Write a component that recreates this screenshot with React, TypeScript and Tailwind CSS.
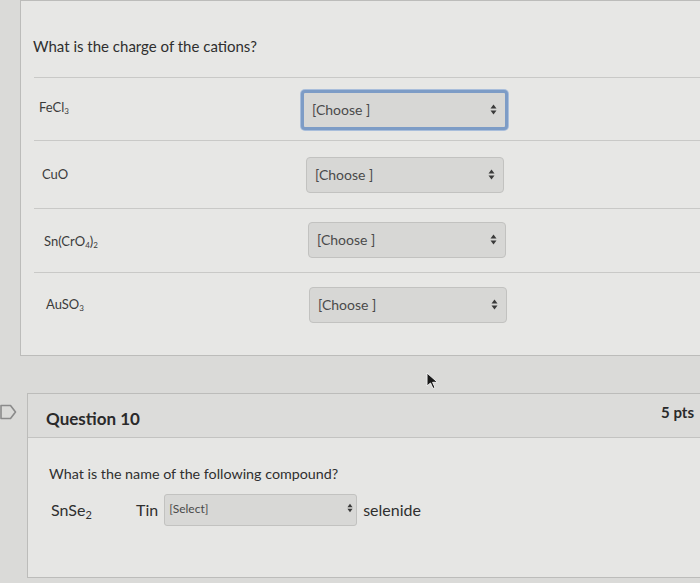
import React from "react";

const font = { fontFamily: "Lato, 'Open Sans', sans-serif" };

function Arrows({ small }: { small?: boolean }) {
  return (
    <svg width={small ? 6 : 7} height={small ? 10 : 11} viewBox="0 0 7 11" className="text-[#3a3a3a]">
      <path d="M3.5 0.5 L6.5 4.5 H0.5 Z" fill="currentColor" />
      <path d="M3.5 10.5 L6.5 6.5 H0.5 Z" fill="currentColor" />
    </svg>
  );
}

function Choose({ focused }: { focused?: boolean }) {
  return (
    <div
      className={
        "flex h-[36px] w-[198px] items-center justify-between rounded-[4px] bg-[#d7d7d5] pl-[8px] pr-[8px] text-[14px] text-[#4a4a4a]" +
        (focused
          ? " h-[40px] w-[207px] border-[3px] border-[#7d9cc6] shadow-[0_0_0_1px_#a9bedb]"
          : " border border-[#c2c2c0]")
      }
    >
      <span>[Choose ]</span>
      <Arrows />
    </div>
  );
}

interface RowProps {
  label: React.ReactNode;
  focused?: boolean;
  shift: string;
  height: string;
  labelShift: string;
}

function Row({ label, focused, shift, height, labelShift }: RowProps) {
  return (
    <div className={"flex border-t border-[#c9c9c7] " + height}>
      <div className={"w-[267px] text-[13px] text-[#3b3b3b] " + labelShift}>{label}</div>
      <div className={shift}>
        <Choose focused={focused} />
      </div>
    </div>
  );
}

export default function App() {
  const rows: RowProps[] = [
    {
      label: <>FeCl<sub className="text-[8px]">3</sub></>,
      focused: true,
      shift: "pt-[12px] ml-[0px]",
      height: "h-[63px]",
      labelShift: "pt-[20px] pl-[5px]",
    },
    {
      label: "CuO",
      shift: "pt-[16px] ml-[5px]",
      height: "h-[68px]",
      labelShift: "pt-[24px] pl-[8px]",
    },
    {
      label: <>Sn(CrO<sub className="text-[8px]">4</sub>)<sub className="text-[8px]">2</sub></>,
      shift: "pt-[13px] ml-[7px]",
      height: "h-[64px]",
      labelShift: "pt-[23px] pl-[10px]",
    },
    {
      label: <>AuSO<sub className="text-[8px]">3</sub></>,
      shift: "pt-[14px] ml-[8px]",
      height: "h-[83px]",
      labelShift: "pt-[22px] pl-[12px]",
    },
  ];

  return (
    <div style={font} className="relative h-[583px] w-[700px] overflow-hidden bg-[#dadad8]">
      {/* first question card */}
      <div className="ml-[20px] h-[356px] border-l border-b border-t border-[#bcbcba] bg-[#e7e7e5]">
        <div className="pl-[12px] pt-[34px] text-[15px] text-[#2f2f2f]">What is the charge of the cations?</div>
        <div className="ml-[13px] mt-[19px]">
          {rows.map((r, i) => (
            <Row key={i} {...r} />
          ))}
        </div>
      </div>

      {/* cursor */}
      <svg className="absolute left-[426px] top-[372px]" width="14" height="18" viewBox="0 0 14 18">
        <path d="M1 1 L1 14 L4.5 11 L7 16.5 L9 15.5 L6.6 10.3 L11.5 10.3 Z" fill="#1a1a1a" stroke="#f0f0f0" strokeWidth="1" />
      </svg>

      {/* question 10 */}
      <div className="mt-[37px] flex">
        <div className="w-[27px] shrink-0 pt-[11px]">
          <svg width="17" height="16" viewBox="0 0 17 16">
            <path d="M1 1.5 H10.5 L15.5 8 L10.5 14.5 H1 Z" fill="none" stroke="#8a8a8a" strokeWidth="1.6" strokeLinejoin="round" />
          </svg>
        </div>
        <div className="flex-1 border-l border-t border-b border-[#bcbcba] bg-[#e6e6e4]">
          <div className="flex h-[44px] items-start justify-between border-b border-[#c3c3c1] bg-[#dcdcda]">
            <div className="pl-[18px] pt-[12px] text-[17px] font-bold text-[#2a2a2a]">Question 10</div>
            <div className="pr-[6px] pt-[7px] text-[15px] font-bold text-[#2a2a2a]">5 pts</div>
          </div>
          <div className="h-[139px] pl-[21px]">
            <div className="pt-[25px] text-[14.3px] text-[#2f2f2f]">What is the name of the following compound?</div>
            <div className="mt-[10px] flex items-center text-[16px] text-[#2f2f2f]">
              <span className="w-[87px] pl-[2px]">
                SnSe<sub className="text-[11px]">2</sub>
              </span>
              <span className="mr-[6px]">Tin</span>
              <div className="flex h-[32px] w-[193px] items-start justify-between rounded-[3px] border border-[#c2c2c0] bg-[#d8d8d6] pl-[4px] pr-[3px] pt-[5px] text-[12px] text-[#4a4a4a]">
                <span>[Select]</span>
                <span className="pt-[3px]">
                  <Arrows small />
                </span>
              </div>
              <span className="ml-[6px]">selenide</span>
            </div>
          </div>
        </div>
      </div>
    </div>
  );
}
